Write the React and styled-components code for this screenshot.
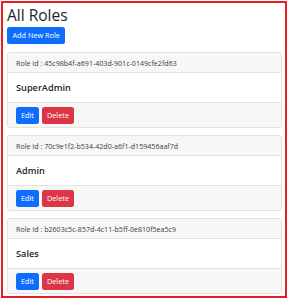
import React from 'react'
import styled, { createGlobalStyle } from 'styled-components'

const GlobalStyle = createGlobalStyle`
  html, body {
    margin: 0;
    padding: 0;
    background: #ffffff;
  }
  body {
    font-family: "Open Sans", "Noto Sans", "Liberation Sans", sans-serif;
    color: #212529;
  }
  * {
    box-sizing: border-box;
  }
`

const Page = styled.div`
  width: 286px;
  height: 297px;
  margin: 1px;
  border: 2px solid #ec1c24;
  padding: 2px 3px 0 4px;
  overflow: hidden;
`

const Title = styled.h1`
  margin: 0 0 2px;
  font-size: 15.5px;
  font-weight: 400;
  line-height: 20px;
  color: #212529;
`

const Button = styled.button`
  height: 17px;
  padding: 0 5px;
  border: none;
  border-radius: 2.5px;
  font-family: inherit;
  font-size: 7.3px;
  line-height: 17px;
  color: #ffffff;
  background: ${(p) => (p.$variant === 'danger' ? '#dc3545' : '#0d6efd')};
  cursor: pointer;
`

const AddButton = styled(Button)`
  display: block;
  margin-bottom: 8px;
  padding: 0 5.5px;
`

const CardList = styled.div`
  display: flex;
  flex-direction: column;
  gap: 7px;
`

const Card = styled.div`
  border: 1px solid #e2e2e2;
  border-radius: 3px;
  overflow: hidden;
  background: #ffffff;
`

const CardHeader = styled.div`
  height: 20px;
  padding: 0 8px;
  display: flex;
  align-items: center;
  font-size: 7.1px;
  color: #3a3d40;
  background: #f7f7f7;
  border-bottom: 1px solid #e2e2e2;
`

const CardBody = styled.div`
  height: 29px;
  padding: 0 8px;
  display: flex;
  align-items: center;
`

const RoleName = styled.h5`
  margin: 0;
  font-size: 9.2px;
  font-weight: 600;
  color: #212529;
`

const CardFooter = styled.div`
  height: 25px;
  padding: 4px 8px 0;
  display: flex;
  gap: 3px;
  background: #f7f7f7;
  border-top: 1px solid #e2e2e2;
`

const roles = [
  { id: '45c98b4f-a691-403d-901c-0149cfe2fd63', name: 'SuperAdmin' },
  { id: '70c9e1f2-b534-42d0-a6f1-d159456aaf7d', name: 'Admin' },
  { id: 'b2603c5c-857d-4c11-b5ff-0e810f5ea5c9', name: 'Sales' },
]

export default function App() {
  return (
    <>
      <GlobalStyle />
      <Page>
        <Title>All Roles</Title>
        <AddButton>Add New Role</AddButton>
        <CardList>
          {roles.map((role) => (
            <Card key={role.id}>
              <CardHeader>Role Id : {role.id}</CardHeader>
              <CardBody>
                <RoleName>{role.name}</RoleName>
              </CardBody>
              <CardFooter>
                <Button>Edit</Button>
                <Button $variant="danger">Delete</Button>
              </CardFooter>
            </Card>
          ))}
        </CardList>
      </Page>
    </>
  )
}
